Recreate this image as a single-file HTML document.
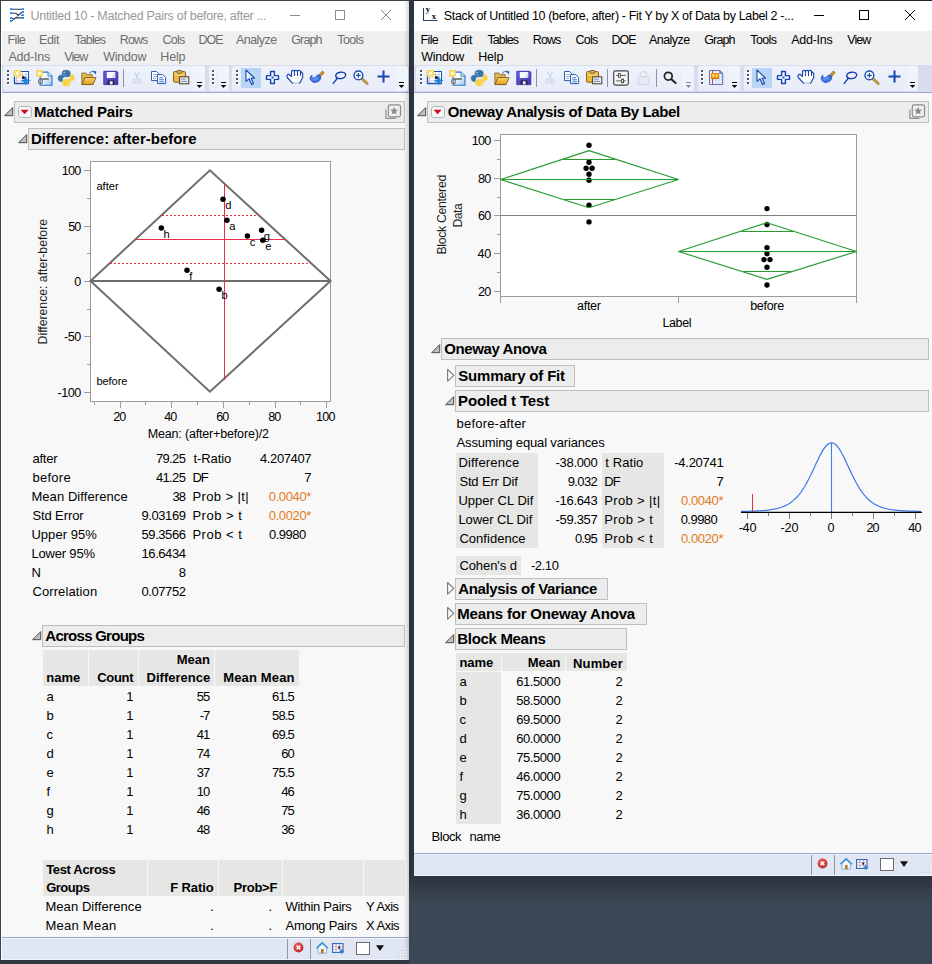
<!DOCTYPE html>
<html lang="en">
<head>
<meta charset="utf-8">
<title>JMP - Matched Pairs and Oneway Analysis</title>
<style>

html,body{margin:0;padding:0;background:#3b4754}
body{width:932px;height:964px;overflow:hidden;position:relative;font-family:"Liberation Sans",sans-serif;font-size:13px;color:#000}
div,section,nav,header,footer,main{position:absolute;box-sizing:border-box}
.g{left:0;top:0;width:932px;height:964px}
span,h1,h2,h3{position:absolute;white-space:pre;line-height:normal;margin:0;padding:0;font-weight:400}
svg{position:absolute;overflow:visible}
svg text{font-family:"Liberation Sans",sans-serif}
.hb{background:#ececec;border:1px solid #bebebe}
.th{background:#e6e6e4}

</style>
</head>
<body>
<div class="g" id="windows" aria-label="JMP windows on desktop">
<div style="left:0px;top:0px;width:932px;height:964px;background:#3b4754;"></div>
<div style="left:409px;top:0px;width:523px;height:905px;background:linear-gradient(to bottom,#2c343f 0,#2c343f 876px,#2d3641 880px,#333e4a 890px,#3b4754 905px);"></div>
<div style="left:0px;top:958px;width:409px;height:6px;background:linear-gradient(to bottom,#2a323c,#333d49);"></div>
<div style="left:0px;top:0px;width:409px;height:960px;background:#3b434f;"></div>
<!-- window 1 -->
<div style="left:1px;top:1px;width:408px;height:30px;background:#ffffff;"></div>
<div style="left:1px;top:31px;width:408px;height:34px;background:#f0f0f0;"></div>
<div style="left:1px;top:65px;width:408px;height:28px;background:#d7ddef;border-bottom:1px solid #9ca6d2;"></div>
<div style="left:1px;top:93px;width:408px;height:844px;background:#f8f8f8;"></div>
<div style="left:1px;top:937px;width:408px;height:23px;background:#e1e7f2;border-top:1px solid #9aa4d0;box-shadow:inset 0 1px 0 #f1f4fb,inset 0 -1px 0 #eef2fa;"></div>
<div style="left:1px;top:31px;width:1px;height:929px;background:#fbfcfe;"></div>
<div style="left:403px;top:1px;width:6px;height:959px;background:linear-gradient(to right,rgba(0,0,0,0) 0,rgba(0,0,0,0.04) 40%,rgba(0,0,0,0.16) 100%);"></div>
<div style="left:414px;top:0px;width:518px;height:1px;background:#20262e;"></div>
<!-- window 414 -->
<div style="left:414px;top:1px;width:518px;height:30px;background:#ffffff;"></div>
<div style="left:414px;top:31px;width:518px;height:34px;background:#f0f0f0;"></div>
<div style="left:414px;top:65px;width:518px;height:28px;background:#d7ddef;border-bottom:1px solid #9ca6d2;"></div>
<div style="left:414px;top:93px;width:518px;height:760px;background:#f8f8f8;"></div>
<div style="left:414px;top:853px;width:518px;height:23px;background:#e1e7f2;border-top:1px solid #9aa4d0;box-shadow:inset 0 1px 0 #f1f4fb,inset 0 -1px 0 #eef2fa;"></div>
<svg style="left:284px;top:5px" width="120" height="22" viewBox="0 0 120 22" fill="none" stroke="#8c8c8c" stroke-width="1"><path d="M6 10.5H16"/><rect x="51.5" y="5.5" width="9" height="9"/><path d="M97 5L107 15M107 5L97 15"/></svg>
<svg style="left:808px;top:5px" width="120" height="22" viewBox="0 0 120 22" fill="none" stroke="#000000" stroke-width="1"><path d="M6 10.5H16"/><rect x="51.5" y="5.5" width="9" height="9"/><path d="M97 5L107 15M107 5L97 15"/></svg>
<svg style="left:10px;top:8px" width="14" height="14" viewBox="0 0 14 14">
<g stroke="#1f3d68" stroke-width="1.1" fill="none"><path d="M1.6 1.2H12.4M1.6 5.2H5.8L8.4 7.2L12.2 4M1.6 10L3.8 11.2L6 9.9H12.4M11 7.2H12.4"/><path d="M1.6 13.1L8.4 7.4" stroke-dasharray="1.6 0.9"/></g>
<g fill="#3b8de6"><rect x="0" y="0.1" width="2" height="2"/><rect x="0" y="4.1" width="2" height="2"/><rect x="0" y="9" width="2" height="2"/><rect x="0" y="12" width="2" height="2"/><rect x="12" y="0.1" width="2" height="2"/><rect x="12" y="3" width="2" height="2"/><rect x="12" y="6.1" width="2" height="2"/><rect x="12" y="9" width="2" height="2"/></g>
</svg>
<svg style="left:422px;top:7px" width="18" height="16" viewBox="0 0 18 16">
<path d="M1.5 1V13.5H15.2" stroke="#1f3f68" stroke-width="1.1" fill="none"/>
<text x="3.7" y="5.2" style="font:700 8.6px 'Liberation Serif',serif" fill="#000">y</text>
<text x="9.7" y="12.1" style="font:700 8.6px 'Liberation Serif',serif" fill="#000">x</text>
</svg>
<span style="left:30.50px;top:9.00px;font-size:12.5px;color:#999999;letter-spacing:-0.286px;">Untitled 10 - Matched Pairs of before, after ...</span>
<span style="left:443.80px;top:9.00px;font-size:12.5px;letter-spacing:-0.352px;">Stack of Untitled 10 (before, after) - Fit Y by X of Data by Label 2 -...</span>
<nav class="g" aria-label="Menu bars">
<span style="left:7.50px;top:33.00px;font-size:12.5px;color:#6d6d6d;letter-spacing:-0.635px;">File</span>
<span style="left:39.00px;top:33.00px;font-size:12.5px;color:#6d6d6d;letter-spacing:-0.358px;">Edit</span>
<span style="left:74.50px;top:33.00px;font-size:12.5px;color:#6d6d6d;letter-spacing:-0.918px;">Tables</span>
<span style="left:119.80px;top:33.00px;font-size:12.5px;color:#6d6d6d;letter-spacing:-0.939px;">Rows</span>
<span style="left:162.50px;top:33.00px;font-size:12.5px;color:#6d6d6d;letter-spacing:-0.755px;">Cols</span>
<span style="left:198.50px;top:33.00px;font-size:12.5px;color:#6d6d6d;letter-spacing:-1.000px;">DOE</span>
<span style="left:236.00px;top:33.00px;font-size:12.5px;color:#6d6d6d;letter-spacing:-0.539px;">Analyze</span>
<span style="left:291.30px;top:33.00px;font-size:12.5px;color:#6d6d6d;letter-spacing:-0.900px;">Graph</span>
<span style="left:337.30px;top:33.00px;font-size:12.5px;color:#6d6d6d;letter-spacing:-0.609px;">Tools</span>
<span style="left:8.50px;top:50.00px;font-size:12.5px;color:#6d6d6d;letter-spacing:-0.224px;">Add-Ins</span>
<span style="left:64.30px;top:50.00px;font-size:12.5px;color:#6d6d6d;letter-spacing:-1.000px;">View</span>
<span style="left:103.30px;top:50.00px;font-size:12.5px;color:#6d6d6d;letter-spacing:-0.268px;">Window</span>
<span style="left:160.30px;top:50.00px;font-size:12.5px;color:#6d6d6d;letter-spacing:-0.189px;">Help</span>
<span style="left:420.50px;top:33.00px;font-size:12.5px;letter-spacing:-0.635px;">File</span>
<span style="left:452.00px;top:33.00px;font-size:12.5px;letter-spacing:-0.358px;">Edit</span>
<span style="left:487.50px;top:33.00px;font-size:12.5px;letter-spacing:-0.918px;">Tables</span>
<span style="left:532.80px;top:33.00px;font-size:12.5px;letter-spacing:-0.939px;">Rows</span>
<span style="left:575.50px;top:33.00px;font-size:12.5px;letter-spacing:-0.755px;">Cols</span>
<span style="left:611.50px;top:33.00px;font-size:12.5px;letter-spacing:-1.000px;">DOE</span>
<span style="left:649.00px;top:33.00px;font-size:12.5px;letter-spacing:-0.539px;">Analyze</span>
<span style="left:704.30px;top:33.00px;font-size:12.5px;letter-spacing:-0.900px;">Graph</span>
<span style="left:750.30px;top:33.00px;font-size:12.5px;letter-spacing:-0.609px;">Tools</span>
<span style="left:791.30px;top:33.00px;font-size:12.5px;letter-spacing:-0.274px;">Add-Ins</span>
<span style="left:847.30px;top:33.00px;font-size:12.5px;letter-spacing:-1.000px;">View</span>
<span style="left:421.30px;top:50.00px;font-size:12.5px;letter-spacing:-0.288px;">Window</span>
<span style="left:478.30px;top:50.00px;font-size:12.5px;letter-spacing:-0.222px;">Help</span>
</nav>
</div>
<div class="g" id="toolbars" aria-label="Toolbars and status bars">
<div style="left:3.4px;top:66px;width:201.4px;height:25px;background:linear-gradient(to bottom,#eef2fb,#e8ecf8);border-radius:3px;"></div>
<div style="left:193.3px;top:66px;width:11.5px;height:25px;background:linear-gradient(to bottom,#f1f6fd,#ecf1fa);border-radius:0 3px 3px 0;"></div>
<div style="left:209px;top:66px;width:20px;height:25px;background:linear-gradient(to bottom,#eef2fb,#e8ecf8);border-radius:3px;"></div>
<div style="left:217.5px;top:66px;width:11.5px;height:25px;background:linear-gradient(to bottom,#f1f6fd,#ecf1fa);border-radius:0 3px 3px 0;"></div>
<div style="left:232.4px;top:66px;width:175.1px;height:25px;background:linear-gradient(to bottom,#eef2fb,#e8ecf8);border-radius:3px;"></div>
<div style="left:396.0px;top:66px;width:11.5px;height:25px;background:linear-gradient(to bottom,#f1f6fd,#ecf1fa);border-radius:0 3px 3px 0;"></div>
<svg style="left:7px;top:70px" width="3" height="15" viewBox="0 0 3 15"><rect x="1" y="1" width="2" height="2" fill="#fff"/><rect x="0" y="0" width="2" height="2" fill="#505560"/><rect x="1" y="5" width="2" height="2" fill="#fff"/><rect x="0" y="4" width="2" height="2" fill="#505560"/><rect x="1" y="9" width="2" height="2" fill="#fff"/><rect x="0" y="8" width="2" height="2" fill="#505560"/><rect x="1" y="13" width="2" height="2" fill="#fff"/><rect x="0" y="12" width="2" height="2" fill="#505560"/></svg>
<svg style="left:14px;top:70px" width="17" height="16" viewBox="0 0 17 16">
<rect x="0.5" y="1.5" width="14" height="12" fill="#fff" stroke="#1a56b0" stroke-width="1"/><path d="M0.5 13.5H14.5M0.5 1.5V13.5" stroke="#1a56b0" stroke-width="1.3" fill="none"/>
<path d="M1.4 4.5H13.6" stroke="#ee8f98" stroke-width="0.8" stroke-dasharray="1 1"/>
<path d="M1.4 8H13.6M1.4 10.8H13.6" stroke="#b4c8ea" stroke-width="0.7"/>
<path d="M8.4 2.5V13M12 2.5V13" stroke="#7da0de" stroke-width="0.7"/><path d="M2.6 7V13" stroke="#ee8f98" stroke-width="0.7"/>
<rect x="0" y="0" width="7" height="6.7" fill="#f8d247"/>
<path d="M3.5 0.3V6.4M0.3 3.35H6.7M1 0.9L6 5.8M6 0.9L1 5.8" stroke="#fff6c4" stroke-width="0.8"/><circle cx="3.5" cy="3.35" r="1.2" fill="#fffbe6"/>
<circle cx="9.5" cy="7.4" r="1.5" fill="#0a0a0a"/>
<path d="M11.7 6.3L13.3 9.2L16.7 10.3L13.5 12L11.6 15.5L9.9 12L6.5 10.8L10 9.4Z" fill="#1e84dc"/>
</svg>
<svg style="left:36px;top:70px" width="17" height="16" viewBox="0 0 17 16">
<defs><linearGradient id="pg36" x1="0" y1="0" x2="1" y2="1"><stop offset="0.3" stop-color="#fdfeff"/><stop offset="1" stop-color="#9cc6ee"/></linearGradient></defs>
<path d="M4.2 2.1H12L16 6V15.3H4.2Z" fill="url(#pg36)" stroke="#2a78c6" stroke-width="1.1"/>
<path d="M12 2.1V6H16" fill="#e9f3fc" stroke="#2a78c6" stroke-width="0.9"/>
<rect x="0" y="0" width="6.8" height="6.7" fill="#f8d247"/>
<path d="M3.4 0.3V6.4M0.3 3.35H6.5M1 0.9L5.8 5.8M5.8 0.9L1 5.8" stroke="#fff6c4" stroke-width="0.8"/><circle cx="3.4" cy="3.35" r="1.2" fill="#fffbe6"/>
<path d="M4.4 9H12.8" stroke="#6a6a6a" stroke-width="1.6"/>
<ellipse cx="4.5" cy="11.4" rx="1.9" ry="2.4" fill="none" stroke="#7a7a7a" stroke-width="1.2"/>
</svg>
<svg style="left:58px;top:70px" width="17" height="16" viewBox="0 0 17 16">
<path d="M8 0.2C5.2 0.2 4.2 1.2 4.2 2.9V4.6H8.2V5.2H2.9C1 5.2 0.2 6.5 0.2 8.3C0.2 10.1 1 11.4 2.9 11.4H4.4V9.1C4.4 7.7 5.5 6.7 6.9 6.7H10.3C11.5 6.7 12.2 5.9 12.2 4.7V2.9C12.2 1.2 11 0.2 8 0.2Z" fill="#3774a9" stroke="#3774a9" stroke-width="0.7"/>
<path d="M8.4 15.9C11.2 15.9 12.2 14.9 12.2 13.2V11.5H8.2V10.9H13.5C15.4 10.9 16.2 9.6 16.2 7.8C16.2 6 15.4 4.7 13.5 4.7H12.4V7C12.4 8.4 11.3 9.4 9.9 9.4H6.5C5.3 9.4 4.6 10.2 4.6 11.4V13.2C4.6 14.9 5.8 15.9 8.4 15.9Z" fill="#f8d245" stroke="#f8d245" stroke-width="0.7"/>
<circle cx="6.1" cy="2.4" r="0.75" fill="#cfe0f0"/><circle cx="10.3" cy="13.7" r="0.75" fill="#fff3c0"/>
</svg>
<svg style="left:80.5px;top:70px" width="16" height="16" viewBox="0 0 16 16">
<defs><linearGradient id="fo80" x1="0" y1="0" x2="0" y2="1"><stop offset="0" stop-color="#fbd668"/><stop offset="1" stop-color="#e39a1c"/></linearGradient></defs>
<path d="M0.8 14.4V3H5L6.2 4.6H11.2V14.4Z" fill="#dcb650" stroke="#94742c" stroke-width="0.9"/>
<path d="M1 14.6L3.8 7.6H15L12 14.6Z" fill="url(#fo80)" stroke="#7a5a1a" stroke-width="0.9"/>
<path d="M8.4 3.4C9.4 1.2 12 0.8 13.6 2.6" fill="none" stroke="#5a86c4" stroke-width="1.2"/>
<path d="M12.2 0.4L15.4 1.6L14.6 4.8Z" fill="#2a5cac"/>
</svg>
<svg style="left:102.5px;top:70px" width="16" height="16" viewBox="0 0 16 16">
<defs><linearGradient id="sv102" x1="0" y1="0" x2="1" y2="1"><stop offset="0" stop-color="#6a62e2"/><stop offset="1" stop-color="#3d36aa"/></linearGradient></defs>
<path d="M0.8 1.3H13.8L14.8 2.3V14.6H0.8Z" fill="url(#sv102)" stroke="#39339c" stroke-width="0.9"/>
<rect x="3.8" y="2" width="8.4" height="6" fill="#f6f8ff"/><path d="M12.2 2L8.6 8H12.2Z" fill="#d5daf0"/>
<rect x="4.6" y="10.4" width="6.8" height="4.2" fill="#23224e"/>
<rect x="6.8" y="11.2" width="2.8" height="3.2" fill="#eeeef8"/>
</svg>
<div style="left:123px;top:69px;width:1px;height:18px;background:#8e93a3;"></div>
<svg style="left:132.4px;top:71px" width="10" height="13" viewBox="0 0 10 13">
<g fill="none" stroke="#cbd6ec" stroke-width="1.2">
<path d="M2.4 0.4L6.2 8.4M7.6 0.4L3.8 8.4"/>
<ellipse cx="2.4" cy="10.4" rx="1.6" ry="2"/><ellipse cx="7.6" cy="10.4" rx="1.6" ry="2"/></g>
</svg>
<svg style="left:150.6px;top:71px" width="16" height="14" viewBox="0 0 16 14">
<path d="M0.5 0.5H5.6L8.4 3.3V9.6H0.5Z" fill="#fff" stroke="#2b5cb6" stroke-width="1"/>
<path d="M2 3.6H6M2 5.6H6.6M2 7.6H5" stroke="#86a7dc" stroke-width="0.9"/>
<path d="M6.5 3.6H11.8L14.6 6.4V12.6H6.5Z" fill="#fff" stroke="#2b5cb6" stroke-width="1"/>
<path d="M8.2 6.8H12M8.2 8.8H13M8.2 10.8H13" stroke="#3f71c8" stroke-width="1"/>
</svg>
<svg style="left:172.6px;top:70px" width="17" height="15" viewBox="0 0 17 15">
<rect x="0.5" y="1.6" width="12" height="10.6" rx="1" fill="#ecb638" stroke="#8a6418" stroke-width="1"/>
<path d="M1.4 2.6H11.6V6H1.4Z" fill="#f7d877" opacity="0.7"/>
<rect x="4" y="0.5" width="4.8" height="2.8" rx="0.8" fill="#d8b768" stroke="#6f5a26" stroke-width="0.9"/>
<rect x="6.6" y="6.8" width="9.2" height="7" fill="#e6ebf5" stroke="#4f3c22" stroke-width="1"/>
<path d="M8.2 9.2H12.6M8.2 11.4H14" stroke="#7d8aa5" stroke-width="1"/>
</svg>
<svg style="left:197px;top:82px" width="6" height="7" viewBox="0 0 6 7"><path d="M0 0.5H5" stroke="#000" stroke-width="1"/><path d="M-0.2 3H5.2L2.5 6.1Z" fill="#000"/></svg>
<svg style="left:212px;top:70px" width="3" height="15" viewBox="0 0 3 15"><rect x="1" y="1" width="2" height="2" fill="#fff"/><rect x="0" y="0" width="2" height="2" fill="#505560"/><rect x="1" y="5" width="2" height="2" fill="#fff"/><rect x="0" y="4" width="2" height="2" fill="#505560"/><rect x="1" y="9" width="2" height="2" fill="#fff"/><rect x="0" y="8" width="2" height="2" fill="#505560"/><rect x="1" y="13" width="2" height="2" fill="#fff"/><rect x="0" y="12" width="2" height="2" fill="#505560"/></svg>
<svg style="left:221px;top:82px" width="6" height="7" viewBox="0 0 6 7"><path d="M0 0.5H5" stroke="#000" stroke-width="1"/><path d="M-0.2 3H5.2L2.5 6.1Z" fill="#000"/></svg>
<svg style="left:235.8px;top:70px" width="3" height="15" viewBox="0 0 3 15"><rect x="1" y="1" width="2" height="2" fill="#fff"/><rect x="0" y="0" width="2" height="2" fill="#505560"/><rect x="1" y="5" width="2" height="2" fill="#fff"/><rect x="0" y="4" width="2" height="2" fill="#505560"/><rect x="1" y="9" width="2" height="2" fill="#fff"/><rect x="0" y="8" width="2" height="2" fill="#505560"/><rect x="1" y="13" width="2" height="2" fill="#fff"/><rect x="0" y="12" width="2" height="2" fill="#505560"/></svg>
<div style="left:241px;top:68px;width:20px;height:20px;background:#b9d5f5;"></div>
<svg style="left:245.3px;top:69.2px" width="12" height="17" viewBox="0 0 12 17"><defs><linearGradient id="ar245" x1="0" y1="0" x2="1" y2="1"><stop offset="0.2" stop-color="#ffffff"/><stop offset="1" stop-color="#a9c8f0"/></linearGradient></defs><path d="M1 1V12.4L4 9.8L6.6 15.4L8.6 14.4L6.2 9.2H9.6Z" fill="url(#ar245)" stroke="#1a48b0" stroke-width="1.1" stroke-linejoin="round"/></svg>
<svg style="left:265.1px;top:70.05px" width="15" height="15" viewBox="0 0 16 16"><path d="M6 1.6H10V6H14.4V10H10V14.4H6V10H1.6V6H6Z" fill="#f4f8fe" stroke="#1747b0" stroke-width="1.5" stroke-linejoin="round"/><rect x="7" y="7" width="2" height="2" fill="#1747b0"/></svg>
<svg style="left:284px;top:66px" width="24" height="22" viewBox="0 0 24 22"><path d="M8.6 17.4L3.3 11.5C2.3 10.2 3.4 8.2 5 8.4L7.5 10.5V5.5C7.5 4.5 8.2 4.4 8.9 4.4C9.8 4.4 10.4 4.6 10.4 5.5C10.4 4.5 11.2 4.4 11.9 4.4C12.8 4.4 13.5 4.6 13.5 5.5C13.5 4.5 14.4 4.4 15 4.4C16 4.4 16.5 4.8 16.6 5.5L18.7 7.5V11.4L15.5 17.4Z" fill="#fff" stroke="#1a44b0" stroke-width="1.15" stroke-linejoin="round"/><path d="M10.4 5.5V10M13.5 5.5V10M16.5 5.6V10" stroke="#1a44b0" stroke-width="1" fill="none"/><path d="M8.8 17.5H15.4" stroke="#c9d8ec" stroke-width="1.2"/></svg>
<svg style="left:306px;top:66px" width="22" height="22" viewBox="0 0 22 22"><defs><radialGradient id="br306" cx="0.45" cy="0.45" r="0.7"><stop offset="0" stop-color="#6aa4f4"/><stop offset="1" stop-color="#1650d0"/></radialGradient></defs>
<path d="M13.2 8.6L16.4 5L18.1 6.6L15 10.2Z" fill="#dba324" stroke="#8a5c12" stroke-width="0.8" stroke-linejoin="round"/>
<path d="M6.2 9.2C4.6 9.8 3.8 11.2 4.2 12.8C4.8 15.2 7 16.8 9.6 16.4C12.6 16 14.8 13.8 14.8 11.6C14.8 10.2 14 9.2 13 9C11.6 8.8 10.6 9.8 9.6 10.8C8.6 11.8 7 12.2 6.2 11.4C5.6 10.8 5.8 9.8 6.2 9.2Z" fill="url(#br306)" stroke="#1648c4" stroke-width="0.7"/></svg>
<svg style="left:328px;top:66px" width="22" height="22" viewBox="0 0 22 22"><ellipse cx="12.7" cy="9.4" rx="5" ry="3.2" fill="none" stroke="#143cb0" stroke-width="1.4" transform="rotate(-8 12.7 9.4)"/><path d="M8.9 11.4C9.6 12.6 8.6 13.6 7.6 14.4L5.2 17.4" fill="none" stroke="#143cb0" stroke-width="1.4" stroke-linecap="round"/></svg>
<svg style="left:352.8px;top:70px" width="16" height="15" viewBox="0 0 16 15"><path d="M8.6 8.6L14.2 13.4" stroke="#8a6418" stroke-width="2.6" stroke-linecap="round"/><path d="M8.6 8.6L14.2 13.4" stroke="#d9a63a" stroke-width="1.5" stroke-linecap="round"/>
<circle cx="5.4" cy="5.4" r="4.4" fill="#fff" stroke="#1c4fb0" stroke-width="1.4"/><path d="M3 5.4H7.8M5.4 3V7.8" stroke="#1c4fb0" stroke-width="1.3"/></svg>
<svg style="left:376.6px;top:70.4px" width="13" height="13" viewBox="0 0 13 13"><path d="M6.5 0.5V12.5M0.5 6.5H12.5" stroke="#1a48b8" stroke-width="2.1"/></svg>
<svg style="left:398.6px;top:82px" width="6" height="7" viewBox="0 0 6 7"><path d="M0 0.5H5" stroke="#000" stroke-width="1"/><path d="M-0.2 3H5.2L2.5 6.1Z" fill="#000"/></svg>
<div style="left:416.4px;top:66px;width:277.20000000000005px;height:25px;background:linear-gradient(to bottom,#eef2fb,#e8ecf8);border-radius:3px;"></div>
<div style="left:682.1px;top:66px;width:11.5px;height:25px;background:linear-gradient(to bottom,#f1f6fd,#ecf1fa);border-radius:0 3px 3px 0;"></div>
<div style="left:698.2px;top:66px;width:42.0px;height:25px;background:linear-gradient(to bottom,#eef2fb,#e8ecf8);border-radius:3px;"></div>
<div style="left:728.7px;top:66px;width:11.5px;height:25px;background:linear-gradient(to bottom,#f1f6fd,#ecf1fa);border-radius:0 3px 3px 0;"></div>
<div style="left:744px;top:66px;width:174px;height:25px;background:linear-gradient(to bottom,#eef2fb,#e8ecf8);border-radius:3px;"></div>
<div style="left:906.5px;top:66px;width:11.5px;height:25px;background:linear-gradient(to bottom,#f1f6fd,#ecf1fa);border-radius:0 3px 3px 0;"></div>
<svg style="left:420px;top:70px" width="3" height="15" viewBox="0 0 3 15"><rect x="1" y="1" width="2" height="2" fill="#fff"/><rect x="0" y="0" width="2" height="2" fill="#505560"/><rect x="1" y="5" width="2" height="2" fill="#fff"/><rect x="0" y="4" width="2" height="2" fill="#505560"/><rect x="1" y="9" width="2" height="2" fill="#fff"/><rect x="0" y="8" width="2" height="2" fill="#505560"/><rect x="1" y="13" width="2" height="2" fill="#fff"/><rect x="0" y="12" width="2" height="2" fill="#505560"/></svg>
<svg style="left:427px;top:70px" width="17" height="16" viewBox="0 0 17 16">
<rect x="0.5" y="1.5" width="14" height="12" fill="#fff" stroke="#1a56b0" stroke-width="1"/><path d="M0.5 13.5H14.5M0.5 1.5V13.5" stroke="#1a56b0" stroke-width="1.3" fill="none"/>
<path d="M1.4 4.5H13.6" stroke="#ee8f98" stroke-width="0.8" stroke-dasharray="1 1"/>
<path d="M1.4 8H13.6M1.4 10.8H13.6" stroke="#b4c8ea" stroke-width="0.7"/>
<path d="M8.4 2.5V13M12 2.5V13" stroke="#7da0de" stroke-width="0.7"/><path d="M2.6 7V13" stroke="#ee8f98" stroke-width="0.7"/>
<rect x="0" y="0" width="7" height="6.7" fill="#f8d247"/>
<path d="M3.5 0.3V6.4M0.3 3.35H6.7M1 0.9L6 5.8M6 0.9L1 5.8" stroke="#fff6c4" stroke-width="0.8"/><circle cx="3.5" cy="3.35" r="1.2" fill="#fffbe6"/>
<circle cx="9.5" cy="7.4" r="1.5" fill="#0a0a0a"/>
<path d="M11.7 6.3L13.3 9.2L16.7 10.3L13.5 12L11.6 15.5L9.9 12L6.5 10.8L10 9.4Z" fill="#1e84dc"/>
</svg>
<svg style="left:449px;top:70px" width="17" height="16" viewBox="0 0 17 16">
<defs><linearGradient id="pg449" x1="0" y1="0" x2="1" y2="1"><stop offset="0.3" stop-color="#fdfeff"/><stop offset="1" stop-color="#9cc6ee"/></linearGradient></defs>
<path d="M4.2 2.1H12L16 6V15.3H4.2Z" fill="url(#pg449)" stroke="#2a78c6" stroke-width="1.1"/>
<path d="M12 2.1V6H16" fill="#e9f3fc" stroke="#2a78c6" stroke-width="0.9"/>
<rect x="0" y="0" width="6.8" height="6.7" fill="#f8d247"/>
<path d="M3.4 0.3V6.4M0.3 3.35H6.5M1 0.9L5.8 5.8M5.8 0.9L1 5.8" stroke="#fff6c4" stroke-width="0.8"/><circle cx="3.4" cy="3.35" r="1.2" fill="#fffbe6"/>
<path d="M4.4 9H12.8" stroke="#6a6a6a" stroke-width="1.6"/>
<ellipse cx="4.5" cy="11.4" rx="1.9" ry="2.4" fill="none" stroke="#7a7a7a" stroke-width="1.2"/>
</svg>
<svg style="left:471px;top:70px" width="17" height="16" viewBox="0 0 17 16">
<path d="M8 0.2C5.2 0.2 4.2 1.2 4.2 2.9V4.6H8.2V5.2H2.9C1 5.2 0.2 6.5 0.2 8.3C0.2 10.1 1 11.4 2.9 11.4H4.4V9.1C4.4 7.7 5.5 6.7 6.9 6.7H10.3C11.5 6.7 12.2 5.9 12.2 4.7V2.9C12.2 1.2 11 0.2 8 0.2Z" fill="#3774a9" stroke="#3774a9" stroke-width="0.7"/>
<path d="M8.4 15.9C11.2 15.9 12.2 14.9 12.2 13.2V11.5H8.2V10.9H13.5C15.4 10.9 16.2 9.6 16.2 7.8C16.2 6 15.4 4.7 13.5 4.7H12.4V7C12.4 8.4 11.3 9.4 9.9 9.4H6.5C5.3 9.4 4.6 10.2 4.6 11.4V13.2C4.6 14.9 5.8 15.9 8.4 15.9Z" fill="#f8d245" stroke="#f8d245" stroke-width="0.7"/>
<circle cx="6.1" cy="2.4" r="0.75" fill="#cfe0f0"/><circle cx="10.3" cy="13.7" r="0.75" fill="#fff3c0"/>
</svg>
<svg style="left:493.5px;top:70px" width="16" height="16" viewBox="0 0 16 16">
<defs><linearGradient id="fo493" x1="0" y1="0" x2="0" y2="1"><stop offset="0" stop-color="#fbd668"/><stop offset="1" stop-color="#e39a1c"/></linearGradient></defs>
<path d="M0.8 14.4V3H5L6.2 4.6H11.2V14.4Z" fill="#dcb650" stroke="#94742c" stroke-width="0.9"/>
<path d="M1 14.6L3.8 7.6H15L12 14.6Z" fill="url(#fo493)" stroke="#7a5a1a" stroke-width="0.9"/>
<path d="M8.4 3.4C9.4 1.2 12 0.8 13.6 2.6" fill="none" stroke="#5a86c4" stroke-width="1.2"/>
<path d="M12.2 0.4L15.4 1.6L14.6 4.8Z" fill="#2a5cac"/>
</svg>
<svg style="left:515.5px;top:70px" width="16" height="16" viewBox="0 0 16 16">
<defs><linearGradient id="sv515" x1="0" y1="0" x2="1" y2="1"><stop offset="0" stop-color="#6a62e2"/><stop offset="1" stop-color="#3d36aa"/></linearGradient></defs>
<path d="M0.8 1.3H13.8L14.8 2.3V14.6H0.8Z" fill="url(#sv515)" stroke="#39339c" stroke-width="0.9"/>
<rect x="3.8" y="2" width="8.4" height="6" fill="#f6f8ff"/><path d="M12.2 2L8.6 8H12.2Z" fill="#d5daf0"/>
<rect x="4.6" y="10.4" width="6.8" height="4.2" fill="#23224e"/>
<rect x="6.8" y="11.2" width="2.8" height="3.2" fill="#eeeef8"/>
</svg>
<div style="left:536px;top:69px;width:1px;height:18px;background:#8e93a3;"></div>
<svg style="left:545.4px;top:71px" width="10" height="13" viewBox="0 0 10 13">
<g fill="none" stroke="#cbd6ec" stroke-width="1.2">
<path d="M2.4 0.4L6.2 8.4M7.6 0.4L3.8 8.4"/>
<ellipse cx="2.4" cy="10.4" rx="1.6" ry="2"/><ellipse cx="7.6" cy="10.4" rx="1.6" ry="2"/></g>
</svg>
<svg style="left:563.6px;top:71px" width="16" height="14" viewBox="0 0 16 14">
<path d="M0.5 0.5H5.6L8.4 3.3V9.6H0.5Z" fill="#fff" stroke="#2b5cb6" stroke-width="1"/>
<path d="M2 3.6H6M2 5.6H6.6M2 7.6H5" stroke="#86a7dc" stroke-width="0.9"/>
<path d="M6.5 3.6H11.8L14.6 6.4V12.6H6.5Z" fill="#fff" stroke="#2b5cb6" stroke-width="1"/>
<path d="M8.2 6.8H12M8.2 8.8H13M8.2 10.8H13" stroke="#3f71c8" stroke-width="1"/>
</svg>
<svg style="left:585.6px;top:70px" width="17" height="15" viewBox="0 0 17 15">
<rect x="0.5" y="1.6" width="12" height="10.6" rx="1" fill="#ecb638" stroke="#8a6418" stroke-width="1"/>
<path d="M1.4 2.6H11.6V6H1.4Z" fill="#f7d877" opacity="0.7"/>
<rect x="4" y="0.5" width="4.8" height="2.8" rx="0.8" fill="#d8b768" stroke="#6f5a26" stroke-width="0.9"/>
<rect x="6.6" y="6.8" width="9.2" height="7" fill="#e6ebf5" stroke="#4f3c22" stroke-width="1"/>
<path d="M8.2 9.2H12.6M8.2 11.4H14" stroke="#7d8aa5" stroke-width="1"/>
</svg>
<div style="left:607px;top:69px;width:1px;height:18px;background:#8e93a3;"></div>
<svg style="left:613px;top:70px" width="16" height="16" viewBox="0 0 16 16"><rect x="0.7" y="0.9" width="14.6" height="14.2" rx="1.8" fill="#f7f7f7" stroke="#444" stroke-width="1.2"/>
<path d="M3.2 5.4H12.8M3.2 10.9H12.8" stroke="#444" stroke-width="0.9"/>
<rect x="5.5" y="3.6" width="1.8" height="3.6" fill="#f7f7f7" stroke="#444" stroke-width="0.9"/><rect x="8.7" y="9.1" width="1.8" height="3.6" fill="#f7f7f7" stroke="#444" stroke-width="0.9"/></svg>
<svg style="left:637px;top:70px" width="13" height="15" viewBox="0 0 13 15"><path d="M3.2 6.6V4.4C3.2 0.8 9.6 0.8 9.6 4.4V6.6" fill="none" stroke="#d5d9e6" stroke-width="1.2"/><rect x="0.8" y="6.6" width="11.2" height="8" rx="1" fill="#e6e9f3" stroke="#d5d9e6" stroke-width="1.1"/></svg>
<div style="left:656px;top:69px;width:1px;height:18px;background:#8e93a3;"></div>
<svg style="left:663px;top:71px" width="14" height="14" viewBox="0 0 14 14"><circle cx="5.3" cy="5.2" r="3.9" fill="none" stroke="#222" stroke-width="1.7"/><path d="M8.4 8.3L12.6 12" stroke="#222" stroke-width="2.1" stroke-linecap="round"/></svg>
<svg style="left:685.5px;top:82px" width="6" height="7" viewBox="0 0 6 7"><path d="M0 0.5H5" stroke="#8a8f9c" stroke-width="1"/><path d="M-0.2 3H5.2L2.5 6.1Z" fill="#8a8f9c"/></svg>
<svg style="left:701.2px;top:70px" width="3" height="15" viewBox="0 0 3 15"><rect x="1" y="1" width="2" height="2" fill="#fff"/><rect x="0" y="0" width="2" height="2" fill="#505560"/><rect x="1" y="5" width="2" height="2" fill="#fff"/><rect x="0" y="4" width="2" height="2" fill="#505560"/><rect x="1" y="9" width="2" height="2" fill="#fff"/><rect x="0" y="8" width="2" height="2" fill="#505560"/><rect x="1" y="13" width="2" height="2" fill="#fff"/><rect x="0" y="12" width="2" height="2" fill="#505560"/></svg>
<svg style="left:709px;top:70px" width="15" height="15" viewBox="0 0 15 15"><path d="M0.5 0.5H10.8L13.7 3.3V14.5H0.5Z" fill="#c4dcf8" stroke="#5a60a6" stroke-width="0.9"/>
<g fill="#fff"><rect x="1.2" y="1.3" width="1.8" height="1.7"/><rect x="1.2" y="4.5" width="1.8" height="1.7"/><rect x="1.2" y="7.6" width="1.8" height="1.7"/><rect x="1.2" y="10.6" width="1.8" height="1.7"/><rect x="1.2" y="13.0" width="1.8" height="1.0"/><rect x="4.4" y="1.3" width="1.8" height="1.7"/><rect x="4.4" y="4.5" width="1.8" height="1.7"/><rect x="4.4" y="7.6" width="1.8" height="1.7"/><rect x="4.4" y="10.6" width="1.8" height="1.7"/><rect x="4.4" y="13.0" width="1.8" height="1.0"/><rect x="7.5" y="1.3" width="1.8" height="1.7"/><rect x="7.5" y="4.5" width="1.8" height="1.7"/><rect x="7.5" y="7.6" width="1.8" height="1.7"/><rect x="7.5" y="10.6" width="1.8" height="1.7"/><rect x="7.5" y="13.0" width="1.8" height="1.0"/><rect x="10.5" y="4.5" width="1.8" height="1.7"/><rect x="10.5" y="7.6" width="1.8" height="1.7"/><rect x="10.5" y="10.6" width="1.8" height="1.7"/><rect x="10.5" y="13.0" width="1.8" height="1.0"/></g>
<path d="M10.8 0.5V3.3H13.7" fill="#4a90e0" stroke="#5a60a6" stroke-width="0.6"/>
<path d="M3.5 0.8V14.2" stroke="#f03a3a" stroke-width="1"/>
<rect x="2.1" y="3.1" width="8" height="5.6" fill="#f27a0a"/><path d="M2.1 8.3H10.1" stroke="#cf5a04" stroke-width="0.9"/><rect x="3.1" y="4" width="2.6" height="3.4" fill="#f6e23c"/><rect x="6.7" y="4" width="2" height="3.4" fill="#f6e23c"/></svg>
<svg style="left:731.8px;top:82px" width="6" height="7" viewBox="0 0 6 7"><path d="M0 0.5H5" stroke="#000" stroke-width="1"/><path d="M-0.2 3H5.2L2.5 6.1Z" fill="#000"/></svg>
<svg style="left:746.8px;top:70px" width="3" height="15" viewBox="0 0 3 15"><rect x="1" y="1" width="2" height="2" fill="#fff"/><rect x="0" y="0" width="2" height="2" fill="#505560"/><rect x="1" y="5" width="2" height="2" fill="#fff"/><rect x="0" y="4" width="2" height="2" fill="#505560"/><rect x="1" y="9" width="2" height="2" fill="#fff"/><rect x="0" y="8" width="2" height="2" fill="#505560"/><rect x="1" y="13" width="2" height="2" fill="#fff"/><rect x="0" y="12" width="2" height="2" fill="#505560"/></svg>
<div style="left:752px;top:68px;width:20px;height:20px;background:#b9d5f5;"></div>
<svg style="left:756.3px;top:69.2px" width="12" height="17" viewBox="0 0 12 17"><defs><linearGradient id="ar756" x1="0" y1="0" x2="1" y2="1"><stop offset="0.2" stop-color="#ffffff"/><stop offset="1" stop-color="#a9c8f0"/></linearGradient></defs><path d="M1 1V12.4L4 9.8L6.6 15.4L8.6 14.4L6.2 9.2H9.6Z" fill="url(#ar756)" stroke="#1a48b0" stroke-width="1.1" stroke-linejoin="round"/></svg>
<svg style="left:776.1px;top:70.05px" width="15" height="15" viewBox="0 0 16 16"><path d="M6 1.6H10V6H14.4V10H10V14.4H6V10H1.6V6H6Z" fill="#f4f8fe" stroke="#1747b0" stroke-width="1.5" stroke-linejoin="round"/><rect x="7" y="7" width="2" height="2" fill="#1747b0"/></svg>
<svg style="left:795px;top:66px" width="24" height="22" viewBox="0 0 24 22"><path d="M8.6 17.4L3.3 11.5C2.3 10.2 3.4 8.2 5 8.4L7.5 10.5V5.5C7.5 4.5 8.2 4.4 8.9 4.4C9.8 4.4 10.4 4.6 10.4 5.5C10.4 4.5 11.2 4.4 11.9 4.4C12.8 4.4 13.5 4.6 13.5 5.5C13.5 4.5 14.4 4.4 15 4.4C16 4.4 16.5 4.8 16.6 5.5L18.7 7.5V11.4L15.5 17.4Z" fill="#fff" stroke="#1a44b0" stroke-width="1.15" stroke-linejoin="round"/><path d="M10.4 5.5V10M13.5 5.5V10M16.5 5.6V10" stroke="#1a44b0" stroke-width="1" fill="none"/><path d="M8.8 17.5H15.4" stroke="#c9d8ec" stroke-width="1.2"/></svg>
<svg style="left:817px;top:66px" width="22" height="22" viewBox="0 0 22 22"><defs><radialGradient id="br817" cx="0.45" cy="0.45" r="0.7"><stop offset="0" stop-color="#6aa4f4"/><stop offset="1" stop-color="#1650d0"/></radialGradient></defs>
<path d="M13.2 8.6L16.4 5L18.1 6.6L15 10.2Z" fill="#dba324" stroke="#8a5c12" stroke-width="0.8" stroke-linejoin="round"/>
<path d="M6.2 9.2C4.6 9.8 3.8 11.2 4.2 12.8C4.8 15.2 7 16.8 9.6 16.4C12.6 16 14.8 13.8 14.8 11.6C14.8 10.2 14 9.2 13 9C11.6 8.8 10.6 9.8 9.6 10.8C8.6 11.8 7 12.2 6.2 11.4C5.6 10.8 5.8 9.8 6.2 9.2Z" fill="url(#br817)" stroke="#1648c4" stroke-width="0.7"/></svg>
<svg style="left:839px;top:66px" width="22" height="22" viewBox="0 0 22 22"><ellipse cx="12.7" cy="9.4" rx="5" ry="3.2" fill="none" stroke="#143cb0" stroke-width="1.4" transform="rotate(-8 12.7 9.4)"/><path d="M8.9 11.4C9.6 12.6 8.6 13.6 7.6 14.4L5.2 17.4" fill="none" stroke="#143cb0" stroke-width="1.4" stroke-linecap="round"/></svg>
<svg style="left:863.8px;top:70px" width="16" height="15" viewBox="0 0 16 15"><path d="M8.6 8.6L14.2 13.4" stroke="#8a6418" stroke-width="2.6" stroke-linecap="round"/><path d="M8.6 8.6L14.2 13.4" stroke="#d9a63a" stroke-width="1.5" stroke-linecap="round"/>
<circle cx="5.4" cy="5.4" r="4.4" fill="#fff" stroke="#1c4fb0" stroke-width="1.4"/><path d="M3 5.4H7.8M5.4 3V7.8" stroke="#1c4fb0" stroke-width="1.3"/></svg>
<svg style="left:887.6px;top:70.4px" width="13" height="13" viewBox="0 0 13 13"><path d="M6.5 0.5V12.5M0.5 6.5H12.5" stroke="#1a48b8" stroke-width="2.1"/></svg>
<svg style="left:909.6px;top:82px" width="6" height="7" viewBox="0 0 6 7"><path d="M0 0.5H5" stroke="#000" stroke-width="1"/><path d="M-0.2 3H5.2L2.5 6.1Z" fill="#000"/></svg>
<div style="left:287px;top:939px;width:1px;height:20px;background:#9095a9;"></div>
<div style="left:310px;top:939px;width:1px;height:20px;background:#9095a9;"></div>
<svg style="left:293.3px;top:942.4px" width="11" height="11" viewBox="0 0 11 11"><defs><radialGradient id="rd408" cx="0.4" cy="0.35" r="0.75"><stop offset="0" stop-color="#ee6a60"/><stop offset="1" stop-color="#b81c1c"/></radialGradient></defs><circle cx="5.5" cy="5.5" r="4.9" fill="url(#rd408)"/><path d="M3.7 3.7L7.3 7.3M7.3 3.7L3.7 7.3" stroke="#fff" stroke-width="1.5"/></svg>
<svg style="left:315.8px;top:942.4px" width="13" height="12" viewBox="0 0 13 12"><path d="M0.5 6.2L6.2 0.8L11.9 6.2" fill="none" stroke="#2f8ad4" stroke-width="1.5"/><path d="M2 5.8V11.2H10.4V5.8L6.2 2Z" fill="#f2f7fc" stroke="#6aa6dc" stroke-width="0.8"/><rect x="5" y="7" width="2.6" height="4.2" fill="#b5761c"/></svg>
<svg style="left:331.8px;top:942.8px" width="13" height="12" viewBox="0 0 13 12"><rect x="0.6" y="0.6" width="10.4" height="8.8" fill="#fff" stroke="#2b5fb4" stroke-width="1.1"/><path d="M0.6 3.4H11M0.6 6.2H11" stroke="#d98a8a" stroke-width="0.7"/><path d="M4 0.6V9.4M7.6 0.6V9.4" stroke="#7b9bd6" stroke-width="0.7"/><rect x="6.2" y="3.6" width="2" height="2" fill="#222"/><path d="M9.4 5.2L10.2 7.6L12.6 8L10.6 9.2L10.2 11.4L8.8 9.6L6.4 9.8L8.2 8.2Z" fill="#2484d6"/></svg>
<div style="left:356px;top:942px;width:14px;height:13px;background:#fff;border:1px solid #6a6a6a;"></div>
<svg style="left:375.8px;top:945px" width="9" height="7" viewBox="0 0 9 7"><path d="M0 0.2H8L4 6Z" fill="#111"/></svg>
<svg style="left:396px;top:947.4px" width="12" height="12" viewBox="0 0 12 12"><rect x="9" y="0" width="1.6" height="1.6" fill="#c9cedc"/><rect x="9.8" y="0.8" width="1.2" height="1.2" fill="#fbfcfe"/><rect x="9" y="3" width="1.6" height="1.6" fill="#c9cedc"/><rect x="9.8" y="3.8" width="1.2" height="1.2" fill="#fbfcfe"/><rect x="6" y="3" width="1.6" height="1.6" fill="#c9cedc"/><rect x="6.800000000000001" y="3.8" width="1.2" height="1.2" fill="#fbfcfe"/><rect x="9" y="6" width="1.6" height="1.6" fill="#c9cedc"/><rect x="9.8" y="6.8" width="1.2" height="1.2" fill="#fbfcfe"/><rect x="6" y="6" width="1.6" height="1.6" fill="#c9cedc"/><rect x="6.800000000000001" y="6.8" width="1.2" height="1.2" fill="#fbfcfe"/><rect x="3" y="6" width="1.6" height="1.6" fill="#c9cedc"/><rect x="3.8000000000000007" y="6.8" width="1.2" height="1.2" fill="#fbfcfe"/><rect x="9" y="9" width="1.6" height="1.6" fill="#c9cedc"/><rect x="9.8" y="9.8" width="1.2" height="1.2" fill="#fbfcfe"/><rect x="6" y="9" width="1.6" height="1.6" fill="#c9cedc"/><rect x="6.800000000000001" y="9.8" width="1.2" height="1.2" fill="#fbfcfe"/><rect x="3" y="9" width="1.6" height="1.6" fill="#c9cedc"/><rect x="3.8000000000000007" y="9.8" width="1.2" height="1.2" fill="#fbfcfe"/><rect x="0" y="9" width="1.6" height="1.6" fill="#c9cedc"/><rect x="0.8000000000000007" y="9.8" width="1.2" height="1.2" fill="#fbfcfe"/></svg>
<div style="left:811px;top:855px;width:1px;height:20px;background:#9095a9;"></div>
<div style="left:834px;top:855px;width:1px;height:20px;background:#9095a9;"></div>
<svg style="left:817.3px;top:858.4px" width="11" height="11" viewBox="0 0 11 11"><defs><radialGradient id="rd932" cx="0.4" cy="0.35" r="0.75"><stop offset="0" stop-color="#ee6a60"/><stop offset="1" stop-color="#b81c1c"/></radialGradient></defs><circle cx="5.5" cy="5.5" r="4.9" fill="url(#rd932)"/><path d="M3.7 3.7L7.3 7.3M7.3 3.7L3.7 7.3" stroke="#fff" stroke-width="1.5"/></svg>
<svg style="left:839.8px;top:858.4px" width="13" height="12" viewBox="0 0 13 12"><path d="M0.5 6.2L6.2 0.8L11.9 6.2" fill="none" stroke="#2f8ad4" stroke-width="1.5"/><path d="M2 5.8V11.2H10.4V5.8L6.2 2Z" fill="#f2f7fc" stroke="#6aa6dc" stroke-width="0.8"/><rect x="5" y="7" width="2.6" height="4.2" fill="#b5761c"/></svg>
<svg style="left:855.8px;top:858.8px" width="13" height="12" viewBox="0 0 13 12"><rect x="0.6" y="0.6" width="10.4" height="8.8" fill="#fff" stroke="#2b5fb4" stroke-width="1.1"/><path d="M0.6 3.4H11M0.6 6.2H11" stroke="#d98a8a" stroke-width="0.7"/><path d="M4 0.6V9.4M7.6 0.6V9.4" stroke="#7b9bd6" stroke-width="0.7"/><rect x="6.2" y="3.6" width="2" height="2" fill="#222"/><path d="M9.4 5.2L10.2 7.6L12.6 8L10.6 9.2L10.2 11.4L8.8 9.6L6.4 9.8L8.2 8.2Z" fill="#2484d6"/></svg>
<div style="left:880px;top:858px;width:14px;height:13px;background:#fff;border:1px solid #6a6a6a;"></div>
<svg style="left:899.8px;top:861px" width="9" height="7" viewBox="0 0 9 7"><path d="M0 0.2H8L4 6Z" fill="#111"/></svg>
<svg style="left:920px;top:863.4px" width="12" height="12" viewBox="0 0 12 12"><rect x="9" y="0" width="1.6" height="1.6" fill="#c9cedc"/><rect x="9.8" y="0.8" width="1.2" height="1.2" fill="#fbfcfe"/><rect x="9" y="3" width="1.6" height="1.6" fill="#c9cedc"/><rect x="9.8" y="3.8" width="1.2" height="1.2" fill="#fbfcfe"/><rect x="6" y="3" width="1.6" height="1.6" fill="#c9cedc"/><rect x="6.800000000000001" y="3.8" width="1.2" height="1.2" fill="#fbfcfe"/><rect x="9" y="6" width="1.6" height="1.6" fill="#c9cedc"/><rect x="9.8" y="6.8" width="1.2" height="1.2" fill="#fbfcfe"/><rect x="6" y="6" width="1.6" height="1.6" fill="#c9cedc"/><rect x="6.800000000000001" y="6.8" width="1.2" height="1.2" fill="#fbfcfe"/><rect x="3" y="6" width="1.6" height="1.6" fill="#c9cedc"/><rect x="3.8000000000000007" y="6.8" width="1.2" height="1.2" fill="#fbfcfe"/><rect x="9" y="9" width="1.6" height="1.6" fill="#c9cedc"/><rect x="9.8" y="9.8" width="1.2" height="1.2" fill="#fbfcfe"/><rect x="6" y="9" width="1.6" height="1.6" fill="#c9cedc"/><rect x="6.800000000000001" y="9.8" width="1.2" height="1.2" fill="#fbfcfe"/><rect x="3" y="9" width="1.6" height="1.6" fill="#c9cedc"/><rect x="3.8000000000000007" y="9.8" width="1.2" height="1.2" fill="#fbfcfe"/><rect x="0" y="9" width="1.6" height="1.6" fill="#c9cedc"/><rect x="0.8000000000000007" y="9.8" width="1.2" height="1.2" fill="#fbfcfe"/></svg>
</div>
<main class="g" id="matched-pairs" aria-label="Matched Pairs report">
<svg style="left:3.5px;top:106.5px" width="10" height="10" viewBox="0 0 10 10"><path d="M0.7 8.7L8.7 0.6V8.7Z" fill="#c0c0c0" stroke="#4c4c4c" stroke-width="1" stroke-linejoin="round"/></svg>
<div class="hb" style="left:14px;top:101px;width:391px;height:22px;"></div>
<svg style="left:18.2px;top:106px" width="14" height="12" viewBox="0 0 14 12"><rect x="0.5" y="0.5" width="13" height="11" rx="2.2" fill="#f6f6f6" stroke="#b5b5b5" stroke-width="1"/><path d="M2.6 3.8H10.6L6.6 8.2Z" fill="#d20a1a"/></svg>
<h1 style="left:34.10px;top:103.00px;font-size:15.0px;font-weight:700;letter-spacing:-0.256px;">Matched Pairs</h1>
<svg style="left:385px;top:104px" width="16" height="16" viewBox="0 0 16 16"><path d="M0.9 5.6V14.4H10.6" fill="none" stroke="#909090" stroke-width="1.2"/><rect x="3.3" y="0.8" width="12.2" height="12" rx="1.8" fill="#efefef" stroke="#8c8c8c" stroke-width="1.2"/><path d="M9.1 2.9L10.3 5.6L13.1 5.8L10.9 7.6L11.6 10.4L9.1 8.9L6.6 10.4L7.3 7.6L5.1 5.8L7.9 5.6Z" fill="#8a8a8a"/></svg>
<svg style="left:17.7px;top:133.6px" width="10" height="10" viewBox="0 0 10 10"><path d="M0.7 8.7L8.7 0.6V8.7Z" fill="#c0c0c0" stroke="#4c4c4c" stroke-width="1" stroke-linejoin="round"/></svg>
<div class="hb" style="left:28px;top:128px;width:377px;height:22px;"></div>
<h2 style="left:30.90px;top:130.00px;font-size:15.0px;font-weight:700;letter-spacing:-0.010px;">Difference: after-before</h2>
<svg style="left:0px;top:0px" width="410" height="450" viewBox="0 0 410 450"><rect x="90.5" y="161.5" width="240.0" height="240.0" fill="#fff" stroke="#9c9c9c" stroke-width="1"/><path d="M84 170.5H90.5M84 226.5H90.5M84 281.5H90.5M84 336.5H90.5M84 392.5H90.5M87 198.5H90.5M87 253.5H90.5M87 309.5H90.5M87 364.5H90.5M120.5 401.5V408M171.5 401.5V408M223.5 401.5V408M275.5 401.5V408M326.5 401.5V408M94.5 401.5V405M145.5 401.5V405M197.5 401.5V405M249.5 401.5V405M300.5 401.5V405" stroke="#9c9c9c" stroke-width="1" fill="none"/><path d="M90.5 281L209.9 170.3L330.5 281L209.9 391.7ZM90.5 281H330.5" fill="none" stroke="#6e6e6e" stroke-width="2" stroke-linejoin="miter"/><path d="M135.6 239.5H284.8M224.5 183V380" stroke="#ea2c45" stroke-width="1" fill="none"/><path d="M162 215.5H259.6M110 263.5H311.4" stroke="#ea2c45" stroke-width="1" stroke-dasharray="2 2" fill="none"/><circle cx="226.9" cy="220.3" r="2.75" fill="#000"/><circle cx="219.1" cy="289.2" r="2.75" fill="#000"/><circle cx="247.4" cy="235.9" r="2.75" fill="#000"/><circle cx="223.0" cy="199.3" r="2.75" fill="#000"/><circle cx="262.8" cy="240.3" r="2.75" fill="#000"/><circle cx="187.0" cy="270.3" r="2.75" fill="#000"/><circle cx="261.6" cy="230.3" r="2.75" fill="#000"/><circle cx="161.3" cy="228.1" r="2.75" fill="#000"/></svg>
<span style="left:229.16px;top:220.00px;font-size:11.15px;">a</span>
<span style="left:221.44px;top:289.00px;font-size:11.15px;">b</span>
<span style="left:249.72px;top:236.00px;font-size:11.15px;">c</span>
<span style="left:225.30px;top:199.00px;font-size:11.15px;">d</span>
<span style="left:265.13px;top:240.00px;font-size:11.15px;">e</span>
<span style="left:189.32px;top:270.00px;font-size:11.15px;">f</span>
<span style="left:263.85px;top:230.00px;font-size:11.15px;">g</span>
<span style="left:163.62px;top:228.00px;font-size:11.15px;">h</span>
<span style="left:96.40px;top:180.00px;font-size:11.15px;letter-spacing:-0.022px;">after</span>
<span style="left:96.40px;top:375.00px;font-size:11.15px;letter-spacing:-0.100px;">before</span>
<span style="left:61.80px;top:164.00px;font-size:12.58px;letter-spacing:-0.802px;">100</span>
<span style="left:68.20px;top:220.00px;font-size:12.58px;letter-spacing:-1.000px;">50</span>
<span style="left:74.20px;top:275.00px;font-size:12.58px;">0</span>
<span style="left:64.00px;top:330.00px;font-size:12.58px;letter-spacing:-0.496px;">-50</span>
<span style="left:57.60px;top:386.00px;font-size:12.58px;letter-spacing:-0.531px;">-100</span>
<span style="left:113.20px;top:410.00px;font-size:12.58px;letter-spacing:-1.000px;">20</span>
<span style="left:164.20px;top:410.00px;font-size:12.58px;letter-spacing:-1.000px;">40</span>
<span style="left:216.20px;top:410.00px;font-size:12.58px;letter-spacing:-1.000px;">60</span>
<span style="left:268.20px;top:410.00px;font-size:12.58px;letter-spacing:-1.000px;">80</span>
<span style="left:316.00px;top:410.00px;font-size:12.58px;letter-spacing:-0.802px;">100</span>
<span style="left:147.70px;top:427.00px;font-size:12.5px;letter-spacing:-0.166px;">Mean: (after+before)/2</span>
<div style="left:0;top:0;width:0;height:0;transform:translate(46.9px,343.4px) rotate(-90deg);transform-origin:0 0">
<span style="left:-1.00px;top:-11.00px;font-size:12.29px;color:#1c1c1c;letter-spacing:-0.028px;">Difference: after-before</span>
</div>
<span style="left:32.40px;top:451.00px;font-size:13.0px;letter-spacing:-0.222px;">after</span>
<span style="left:155.93px;top:451.00px;font-size:13.0px;letter-spacing:-0.638px;">79.25</span>
<span style="left:193.40px;top:451.00px;font-size:13.0px;letter-spacing:-0.061px;">t-Ratio</span>
<span style="left:259.98px;top:451.00px;font-size:13.0px;letter-spacing:-0.383px;">4.207407</span>
<span style="left:32.40px;top:470.00px;font-size:13.0px;letter-spacing:0.271px;">before</span>
<span style="left:155.93px;top:470.00px;font-size:13.0px;letter-spacing:-0.638px;">41.25</span>
<span style="left:192.40px;top:470.00px;font-size:13.0px;letter-spacing:-1.000px;">DF</span>
<span style="left:304.30px;top:470.00px;font-size:13.0px;">7</span>
<span style="left:31.40px;top:489.00px;font-size:13.0px;letter-spacing:0.077px;">Mean Difference</span>
<span style="left:172.46px;top:489.00px;font-size:13.0px;letter-spacing:-1.000px;">38</span>
<span style="left:192.40px;top:489.00px;font-size:13.0px;letter-spacing:0.391px;">Prob &gt; |t|</span>
<span style="left:268.79px;top:489.00px;font-size:13.0px;color:#e57a20;letter-spacing:-0.376px;">0.0040*</span>
<span style="left:32.40px;top:508.00px;font-size:13.0px;letter-spacing:-0.098px;">Std Error</span>
<span style="left:141.56px;top:508.00px;font-size:13.0px;letter-spacing:-0.439px;">9.03169</span>
<span style="left:192.40px;top:508.00px;font-size:13.0px;letter-spacing:0.503px;">Prob &gt; t</span>
<span style="left:268.79px;top:508.00px;font-size:13.0px;color:#e57a20;letter-spacing:-0.376px;">0.0020*</span>
<span style="left:31.40px;top:527.00px;font-size:13.0px;letter-spacing:0.052px;">Upper 95%</span>
<span style="left:141.56px;top:527.00px;font-size:13.0px;letter-spacing:-0.439px;">59.3566</span>
<span style="left:192.40px;top:527.00px;font-size:13.0px;letter-spacing:0.503px;">Prob &lt; t</span>
<span style="left:269.05px;top:527.00px;font-size:13.0px;letter-spacing:-0.517px;">0.9980</span>
<span style="left:31.40px;top:546.00px;font-size:13.0px;letter-spacing:-0.173px;">Lower 95%</span>
<span style="left:141.56px;top:546.00px;font-size:13.0px;letter-spacing:-0.439px;">16.6434</span>
<span style="left:31.40px;top:565.00px;font-size:13.0px;">N</span>
<span style="left:178.70px;top:565.00px;font-size:13.0px;">8</span>
<span style="left:32.40px;top:584.00px;font-size:13.0px;letter-spacing:0.114px;">Correlation</span>
<span style="left:141.56px;top:584.00px;font-size:13.0px;letter-spacing:-0.439px;">0.07752</span>
<svg style="left:31.7px;top:631.2px" width="10" height="10" viewBox="0 0 10 10"><path d="M0.7 8.7L8.7 0.6V8.7Z" fill="#c0c0c0" stroke="#4c4c4c" stroke-width="1" stroke-linejoin="round"/></svg>
<div class="hb" style="left:42px;top:625px;width:363px;height:22px;"></div>
<h3 style="left:45.30px;top:627.00px;font-size:15.0px;font-weight:700;letter-spacing:-0.736px;">Across Groups</h3>
<div class="th" style="left:43px;top:650px;width:45px;height:36px;"></div>
<div class="th" style="left:89px;top:650px;width:49px;height:36px;"></div>
<div class="th" style="left:139px;top:650px;width:75px;height:36px;"></div>
<div class="th" style="left:215px;top:650px;width:84px;height:36px;"></div>
<span style="left:46.20px;top:670.00px;font-size:13.0px;font-weight:700;letter-spacing:0.020px;">name</span>
<span style="left:97.30px;top:670.00px;font-size:13.0px;font-weight:700;letter-spacing:-0.329px;">Count</span>
<span style="left:176.70px;top:652.00px;font-size:13.0px;font-weight:700;">Mean</span>
<span style="left:146.60px;top:670.00px;font-size:13.0px;font-weight:700;letter-spacing:0.006px;">Difference</span>
<span style="left:223.20px;top:670.00px;font-size:13.0px;font-weight:700;letter-spacing:0.158px;">Mean Mean</span>
<span style="left:46.40px;top:689.00px;font-size:13.0px;">a</span>
<span style="left:126.30px;top:689.00px;font-size:13.0px;">1</span>
<span style="left:196.76px;top:689.00px;font-size:13.0px;letter-spacing:-1.000px;">55</span>
<span style="left:272.02px;top:689.00px;font-size:13.0px;letter-spacing:-0.834px;">61.5</span>
<span style="left:46.40px;top:708.00px;font-size:13.0px;">b</span>
<span style="left:126.30px;top:708.00px;font-size:13.0px;">1</span>
<span style="left:199.67px;top:708.00px;font-size:13.0px;letter-spacing:-1.000px;">-7</span>
<span style="left:272.02px;top:708.00px;font-size:13.0px;letter-spacing:-0.834px;">58.5</span>
<span style="left:46.40px;top:727.00px;font-size:13.0px;">c</span>
<span style="left:126.30px;top:727.00px;font-size:13.0px;">1</span>
<span style="left:196.76px;top:727.00px;font-size:13.0px;letter-spacing:-1.000px;">41</span>
<span style="left:272.02px;top:727.00px;font-size:13.0px;letter-spacing:-0.834px;">69.5</span>
<span style="left:46.40px;top:746.00px;font-size:13.0px;">d</span>
<span style="left:126.30px;top:746.00px;font-size:13.0px;">1</span>
<span style="left:196.76px;top:746.00px;font-size:13.0px;letter-spacing:-1.000px;">74</span>
<span style="left:281.36px;top:746.00px;font-size:13.0px;letter-spacing:-1.000px;">60</span>
<span style="left:46.40px;top:765.00px;font-size:13.0px;">e</span>
<span style="left:126.30px;top:765.00px;font-size:13.0px;">1</span>
<span style="left:196.76px;top:765.00px;font-size:13.0px;letter-spacing:-1.000px;">37</span>
<span style="left:272.02px;top:765.00px;font-size:13.0px;letter-spacing:-0.834px;">75.5</span>
<span style="left:46.40px;top:784.00px;font-size:13.0px;">f</span>
<span style="left:126.30px;top:784.00px;font-size:13.0px;">1</span>
<span style="left:196.76px;top:784.00px;font-size:13.0px;letter-spacing:-1.000px;">10</span>
<span style="left:281.36px;top:784.00px;font-size:13.0px;letter-spacing:-1.000px;">46</span>
<span style="left:46.40px;top:803.00px;font-size:13.0px;">g</span>
<span style="left:126.30px;top:803.00px;font-size:13.0px;">1</span>
<span style="left:196.76px;top:803.00px;font-size:13.0px;letter-spacing:-1.000px;">46</span>
<span style="left:281.36px;top:803.00px;font-size:13.0px;letter-spacing:-1.000px;">75</span>
<span style="left:46.40px;top:822.00px;font-size:13.0px;">h</span>
<span style="left:126.30px;top:822.00px;font-size:13.0px;">1</span>
<span style="left:196.76px;top:822.00px;font-size:13.0px;letter-spacing:-1.000px;">48</span>
<span style="left:281.36px;top:822.00px;font-size:13.0px;letter-spacing:-1.000px;">36</span>
<div class="th" style="left:43px;top:860px;width:104px;height:36px;"></div>
<div class="th" style="left:148px;top:860px;width:70px;height:36px;"></div>
<div class="th" style="left:219px;top:860px;width:63px;height:36px;"></div>
<div class="th" style="left:283px;top:860px;width:80px;height:36px;"></div>
<div class="th" style="left:364px;top:860px;width:41px;height:36px;"></div>
<span style="left:46.20px;top:862.00px;font-size:13.0px;font-weight:700;letter-spacing:-0.345px;">Test Across</span>
<span style="left:46.20px;top:880.00px;font-size:13.0px;font-weight:700;letter-spacing:-0.501px;">Groups</span>
<span style="left:170.20px;top:880.00px;font-size:13.0px;font-weight:700;letter-spacing:-0.087px;">F Ratio</span>
<span style="left:233.50px;top:880.00px;font-size:13.0px;font-weight:700;letter-spacing:-0.263px;">Prob&gt;F</span>
<span style="left:45.40px;top:899.00px;font-size:13.0px;letter-spacing:0.077px;">Mean Difference</span>
<span style="left:45.40px;top:918.00px;font-size:13.0px;letter-spacing:0.259px;">Mean Mean</span>
<span style="left:210.19px;top:899.00px;font-size:13.0px;">.</span>
<span style="left:268.59px;top:899.00px;font-size:13.0px;">.</span>
<span style="left:210.19px;top:918.00px;font-size:13.0px;">.</span>
<span style="left:268.59px;top:918.00px;font-size:13.0px;">.</span>
<span style="left:285.50px;top:899.00px;font-size:13.0px;letter-spacing:-0.278px;">Within Pairs</span>
<span style="left:285.50px;top:918.00px;font-size:13.0px;letter-spacing:-0.272px;">Among Pairs</span>
<span style="left:366.00px;top:899.00px;font-size:13.0px;letter-spacing:-0.578px;">Y Axis</span>
<span style="left:366.00px;top:918.00px;font-size:13.0px;letter-spacing:-0.525px;">X Axis</span>
</main>
<main class="g" id="oneway" aria-label="Oneway Analysis of Data By Label report">
<svg style="left:416.7px;top:106.5px" width="10" height="10" viewBox="0 0 10 10"><path d="M0.7 8.7L8.7 0.6V8.7Z" fill="#c0c0c0" stroke="#4c4c4c" stroke-width="1" stroke-linejoin="round"/></svg>
<div class="hb" style="left:427px;top:101px;width:502px;height:22px;"></div>
<svg style="left:431.2px;top:106px" width="14" height="12" viewBox="0 0 14 12"><rect x="0.5" y="0.5" width="13" height="11" rx="2.2" fill="#f6f6f6" stroke="#b5b5b5" stroke-width="1"/><path d="M2.6 3.8H10.6L6.6 8.2Z" fill="#d20a1a"/></svg>
<h1 style="left:447.80px;top:103.00px;font-size:15.0px;font-weight:700;letter-spacing:-0.392px;">Oneway Analysis of Data By Label</h1>
<svg style="left:909.3px;top:103.6px" width="16" height="16" viewBox="0 0 16 16"><path d="M0.9 5.6V14.4H10.6" fill="none" stroke="#909090" stroke-width="1.2"/><rect x="3.3" y="0.8" width="12.2" height="12" rx="1.8" fill="#efefef" stroke="#8c8c8c" stroke-width="1.2"/><path d="M9.1 2.9L10.3 5.6L13.1 5.8L10.9 7.6L11.6 10.4L9.1 8.9L6.6 10.4L7.3 7.6L5.1 5.8L7.9 5.6Z" fill="#8a8a8a"/></svg>
<svg style="left:414px;top:0px" width="518" height="340" viewBox="414 0 518 340"><rect x="500.5" y="134.5" width="356.0" height="162.0" fill="#fff" stroke="#9c9c9c" stroke-width="1"/><path d="M494 140.5H500.5M494 178.5H500.5M494 215.5H500.5M494 253.5H500.5M494 291.5H500.5M497 159.5H500.5M497 197.5H500.5M497 234.5H500.5M497 272.5H500.5M500.5 296.5V303M678.5 296.5V303M856.5 296.5V303" stroke="#9c9c9c" stroke-width="1" fill="none"/><path d="M500.5 215.5H856.5" stroke="#808080" stroke-width="1" fill="none"/><circle cx="589.0" cy="145.3" r="2.7" fill="#000"/><circle cx="589.0" cy="162.2" r="2.7" fill="#000"/><circle cx="586.1" cy="168.3" r="2.7" fill="#000"/><circle cx="592.1" cy="168.3" r="2.7" fill="#000"/><circle cx="589.0" cy="174.2" r="2.7" fill="#000"/><circle cx="589.0" cy="180.3" r="2.7" fill="#000"/><circle cx="589.0" cy="205.3" r="2.7" fill="#000"/><circle cx="589.0" cy="221.9" r="2.7" fill="#000"/><circle cx="767.0" cy="208.6" r="2.7" fill="#000"/><circle cx="767.0" cy="224.5" r="2.7" fill="#000"/><circle cx="767.0" cy="247.6" r="2.7" fill="#000"/><circle cx="767.0" cy="253.7" r="2.7" fill="#000"/><circle cx="764.0" cy="259.6" r="2.7" fill="#000"/><circle cx="770.0" cy="259.6" r="2.7" fill="#000"/><circle cx="767.0" cy="267.2" r="2.7" fill="#000"/><circle cx="767.0" cy="285.0" r="2.7" fill="#000"/><path d="M500.5 179.5L589.0 150.6L678.5 179.5L589.0 207.7Z" fill="none" stroke="#279c2e" stroke-width="1.15" stroke-linejoin="round"/><path d="M500.5 179.5H678.5M563.4 159.5H615.2M564.4 199.5H614.4" fill="none" stroke="#279c2e" stroke-width="1"/><path d="M678.5 251.5L767.0 222.7L856.5 251.5L767.0 279.4Z" fill="none" stroke="#279c2e" stroke-width="1.15" stroke-linejoin="round"/><path d="M678.5 251.5H856.5M741.0 231.5H794.0M743.6 271.5H791.2" fill="none" stroke="#279c2e" stroke-width="1"/></svg>
<span style="left:471.80px;top:134.00px;font-size:12.58px;letter-spacing:-0.752px;">100</span>
<span style="left:477.90px;top:172.00px;font-size:12.58px;letter-spacing:-0.605px;">80</span>
<span style="left:477.90px;top:209.00px;font-size:12.58px;letter-spacing:-0.605px;">60</span>
<span style="left:477.60px;top:247.00px;font-size:12.58px;letter-spacing:-0.305px;">40</span>
<span style="left:478.00px;top:285.00px;font-size:12.58px;letter-spacing:-0.705px;">20</span>
<span style="left:577.00px;top:299.00px;font-size:12.5px;letter-spacing:-0.263px;">after</span>
<span style="left:750.20px;top:299.00px;font-size:12.5px;letter-spacing:-0.300px;">before</span>
<span style="left:662.50px;top:316.00px;font-size:12.5px;letter-spacing:-0.404px;">Label</span>
<div style="left:0;top:0;width:0;height:0;transform:translate(446.2px,253.6px) rotate(-90deg);transform-origin:0 0">
<span style="left:-1.00px;top:-11.00px;font-size:12.29px;color:#1c1c1c;letter-spacing:-0.318px;">Block Centered</span>
</div>
<div style="left:0;top:0;width:0;height:0;transform:translate(462.2px,226.6px) rotate(-90deg);transform-origin:0 0">
<span style="left:-1.00px;top:-11.00px;font-size:12.29px;color:#1c1c1c;letter-spacing:-0.508px;">Data</span>
</div>
<svg style="left:430.8px;top:343.6px" width="10" height="10" viewBox="0 0 10 10"><path d="M0.7 8.7L8.7 0.6V8.7Z" fill="#c0c0c0" stroke="#4c4c4c" stroke-width="1" stroke-linejoin="round"/></svg>
<div class="hb" style="left:441px;top:338px;width:488px;height:22px;"></div>
<h2 style="left:444.20px;top:340.00px;font-size:15.0px;font-weight:700;letter-spacing:-0.386px;">Oneway Anova</h2>
<svg style="left:446.6px;top:368.70000000000005px" width="8" height="13" viewBox="0 0 8 13"><path d="M0.6 0.5L6.8 6.3L0.6 12.1Z" fill="#fcfcfc" stroke="#787878" stroke-width="1.1" stroke-linejoin="round"/></svg>
<div class="hb" style="left:455px;top:365px;width:120px;height:22px;"></div>
<h3 style="left:458.30px;top:367.00px;font-size:15.0px;font-weight:700;letter-spacing:-0.184px;">Summary of Fit</h3>
<svg style="left:444.8px;top:395.6px" width="10" height="10" viewBox="0 0 10 10"><path d="M0.7 8.7L8.7 0.6V8.7Z" fill="#c0c0c0" stroke="#4c4c4c" stroke-width="1" stroke-linejoin="round"/></svg>
<div class="hb" style="left:455px;top:390px;width:474px;height:22px;"></div>
<h3 style="left:458.10px;top:392.00px;font-size:15.0px;font-weight:700;letter-spacing:-0.164px;">Pooled t Test</h3>
<span style="left:456.60px;top:416.00px;font-size:13.0px;letter-spacing:0.193px;">before-after</span>
<span style="left:456.60px;top:435.00px;font-size:13.0px;letter-spacing:-0.159px;">Assuming equal variances</span>
<div class="th" style="left:456px;top:453px;width:82px;height:95px;"></div>
<div class="th" style="left:602px;top:453px;width:62px;height:95px;"></div>
<span style="left:458.40px;top:455.00px;font-size:13.0px;letter-spacing:0.191px;">Difference</span>
<span style="left:555.62px;top:455.00px;font-size:13.0px;letter-spacing:-0.330px;">-38.000</span>
<span style="left:605.30px;top:455.00px;font-size:13.0px;letter-spacing:0.078px;">t Ratio</span>
<span style="left:674.33px;top:455.00px;font-size:13.0px;letter-spacing:-0.290px;">-4.20741</span>
<span style="left:459.40px;top:474.00px;font-size:13.0px;letter-spacing:-0.153px;">Std Err Dif</span>
<span style="left:567.73px;top:474.00px;font-size:13.0px;letter-spacing:-0.638px;">9.032</span>
<span style="left:604.30px;top:474.00px;font-size:13.0px;letter-spacing:-1.000px;">DF</span>
<span style="left:716.40px;top:474.00px;font-size:13.0px;">7</span>
<span style="left:458.40px;top:493.00px;font-size:13.0px;letter-spacing:0.028px;">Upper CL Dif</span>
<span style="left:555.62px;top:493.00px;font-size:13.0px;letter-spacing:-0.330px;">-16.643</span>
<span style="left:604.30px;top:493.00px;font-size:13.0px;letter-spacing:0.347px;">Prob &gt; |t|</span>
<span style="left:680.89px;top:493.00px;font-size:13.0px;color:#e57a20;letter-spacing:-0.376px;">0.0040*</span>
<span style="left:458.40px;top:512.00px;font-size:13.0px;letter-spacing:-0.073px;">Lower CL Dif</span>
<span style="left:555.62px;top:512.00px;font-size:13.0px;letter-spacing:-0.330px;">-59.357</span>
<span style="left:604.30px;top:512.00px;font-size:13.0px;letter-spacing:0.391px;">Prob &gt; t</span>
<span style="left:680.65px;top:512.00px;font-size:13.0px;letter-spacing:-0.517px;">0.9980</span>
<span style="left:459.40px;top:531.00px;font-size:13.0px;letter-spacing:0.031px;">Confidence</span>
<span style="left:574.92px;top:531.00px;font-size:13.0px;letter-spacing:-0.834px;">0.95</span>
<span style="left:604.30px;top:531.00px;font-size:13.0px;letter-spacing:0.391px;">Prob &lt; t</span>
<span style="left:680.89px;top:531.00px;font-size:13.0px;color:#e57a20;letter-spacing:-0.376px;">0.0020*</span>
<div class="th" style="left:456px;top:556px;width:65px;height:19px;"></div>
<span style="left:459.40px;top:558.00px;font-size:13.0px;letter-spacing:-0.076px;">Cohen&#x27;s d</span>
<span style="left:530.90px;top:558.00px;font-size:13.0px;letter-spacing:-0.403px;">-2.10</span>
<svg style="left:414px;top:430px" width="518" height="110" viewBox="414 430 518 110"><path d="M741.0 511.39 L742.5 511.37 L744.0 511.34 L745.5 511.31 L747.0 511.28 L748.5 511.25 L750.0 511.21 L751.5 511.16 L753.0 511.11 L754.5 511.06 L756.0 510.99 L757.5 510.92 L759.0 510.84 L760.5 510.75 L762.0 510.65 L763.5 510.54 L765.0 510.41 L766.5 510.26 L768.0 510.10 L769.5 509.91 L771.0 509.70 L772.5 509.46 L774.0 509.20 L775.5 508.89 L777.0 508.55 L778.5 508.16 L780.0 507.73 L781.5 507.24 L783.0 506.68 L784.5 506.06 L786.0 505.36 L787.5 504.57 L789.0 503.69 L790.5 502.70 L792.0 501.60 L793.5 500.37 L795.0 499.01 L796.5 497.51 L798.0 495.85 L799.5 494.03 L801.0 492.04 L802.5 489.87 L804.0 487.53 L805.5 485.02 L807.0 482.34 L808.5 479.51 L810.0 476.54 L811.5 473.45 L813.0 470.27 L814.5 467.05 L816.0 463.81 L817.5 460.62 L819.0 457.52 L820.5 454.58 L822.0 451.84 L823.5 449.37 L825.0 447.23 L826.5 445.47 L828.0 444.12 L829.5 443.24 L831.0 442.83 L832.5 442.91 L834.0 443.48 L835.5 444.52 L837.0 446.01 L838.5 447.90 L840.0 450.16 L841.5 452.72 L843.0 455.54 L844.5 458.54 L846.0 461.68 L847.5 464.89 L849.0 468.13 L850.5 471.34 L852.0 474.49 L853.5 477.54 L855.0 480.47 L856.5 483.26 L858.0 485.88 L859.5 488.33 L861.0 490.61 L862.5 492.72 L864.0 494.65 L865.5 496.42 L867.0 498.03 L868.5 499.48 L870.0 500.80 L871.5 501.98 L873.0 503.04 L874.5 503.99 L876.0 504.84 L877.5 505.60 L879.0 506.28 L880.5 506.88 L882.0 507.41 L883.5 507.88 L885.0 508.30 L886.5 508.67 L888.0 509.00 L889.5 509.29 L891.0 509.55 L892.5 509.77 L894.0 509.98 L895.5 510.15 L897.0 510.31 L898.5 510.45 L900.0 510.58 L901.5 510.69 L903.0 510.78 L904.5 510.87 L906.0 510.95 L907.5 511.02 L909.0 511.08 L910.5 511.13 L912.0 511.18 L913.5 511.22 L915.0 511.26 L916.5 511.29 L918.0 511.32 L919.5 511.35 L921.0 511.37" fill="none" stroke="#3f7df0" stroke-width="1.25"/><path d="M831.5 442.8V512.0" stroke="#3f7df0" stroke-width="1.1"/><path d="M752.5 494V512.0" stroke="#ea2c45" stroke-width="1"/><path d="M747.5 513V519M789.5 513V519M831.5 513V519M873.5 513V519M915.5 513V519M768.5 513V516M810.5 513V516M852.5 513V516M894.5 513V516" stroke="#7c7c7c" stroke-width="1" fill="none"/><path d="M741 512.4H922" stroke="#000" stroke-width="1.3"/></svg>
<span style="left:738.70px;top:521.00px;font-size:12.67px;letter-spacing:-0.279px;">-40</span>
<span style="left:780.60px;top:521.00px;font-size:12.67px;letter-spacing:-0.229px;">-20</span>
<span style="left:827.60px;top:521.00px;font-size:12.67px;">0</span>
<span style="left:866.50px;top:521.00px;font-size:12.67px;letter-spacing:-0.939px;">20</span>
<span style="left:908.30px;top:521.00px;font-size:12.67px;letter-spacing:-0.939px;">40</span>
<svg style="left:446.6px;top:581.7px" width="8" height="13" viewBox="0 0 8 13"><path d="M0.6 0.5L6.8 6.3L0.6 12.1Z" fill="#fcfcfc" stroke="#787878" stroke-width="1.1" stroke-linejoin="round"/></svg>
<div class="hb" style="left:455px;top:578px;width:153px;height:22px;"></div>
<h3 style="left:458.30px;top:580.00px;font-size:15.0px;font-weight:700;letter-spacing:-0.361px;">Analysis of Variance</h3>
<svg style="left:446.6px;top:606.7px" width="8" height="13" viewBox="0 0 8 13"><path d="M0.6 0.5L6.8 6.3L0.6 12.1Z" fill="#fcfcfc" stroke="#787878" stroke-width="1.1" stroke-linejoin="round"/></svg>
<div class="hb" style="left:455px;top:603px;width:192px;height:22px;"></div>
<h3 style="left:457.30px;top:605.00px;font-size:15.0px;font-weight:700;letter-spacing:-0.198px;">Means for Oneway Anova</h3>
<svg style="left:444.8px;top:633.8px" width="10" height="10" viewBox="0 0 10 10"><path d="M0.7 8.7L8.7 0.6V8.7Z" fill="#c0c0c0" stroke="#4c4c4c" stroke-width="1" stroke-linejoin="round"/></svg>
<div class="hb" style="left:455px;top:628px;width:172px;height:22px;"></div>
<h3 style="left:457.30px;top:630.00px;font-size:15.0px;font-weight:700;letter-spacing:-0.316px;">Block Means</h3>
<div class="th" style="left:456px;top:653px;width:45px;height:18px;"></div>
<div class="th" style="left:502px;top:653px;width:63px;height:18px;"></div>
<div class="th" style="left:566px;top:653px;width:61px;height:18px;"></div>
<div class="th" style="left:456px;top:672px;width:45px;height:152px;"></div>
<span style="left:459.40px;top:655.00px;font-size:13.0px;font-weight:700;letter-spacing:-0.046px;">name</span>
<span style="left:527.80px;top:655.00px;font-size:13.0px;font-weight:700;letter-spacing:-0.231px;">Mean</span>
<span style="left:573.10px;top:656.00px;font-size:13.0px;font-weight:700;letter-spacing:0.107px;">Number</span>
<span style="left:459.60px;top:674.00px;font-size:13.0px;">a</span>
<span style="left:516.26px;top:674.00px;font-size:13.0px;letter-spacing:-0.439px;">61.5000</span>
<span style="left:615.60px;top:674.00px;font-size:13.0px;">2</span>
<span style="left:459.60px;top:693.00px;font-size:13.0px;">b</span>
<span style="left:516.26px;top:693.00px;font-size:13.0px;letter-spacing:-0.439px;">58.5000</span>
<span style="left:615.60px;top:693.00px;font-size:13.0px;">2</span>
<span style="left:459.60px;top:712.00px;font-size:13.0px;">c</span>
<span style="left:516.26px;top:712.00px;font-size:13.0px;letter-spacing:-0.439px;">69.5000</span>
<span style="left:615.60px;top:712.00px;font-size:13.0px;">2</span>
<span style="left:459.60px;top:731.00px;font-size:13.0px;">d</span>
<span style="left:516.26px;top:731.00px;font-size:13.0px;letter-spacing:-0.439px;">60.0000</span>
<span style="left:615.60px;top:731.00px;font-size:13.0px;">2</span>
<span style="left:459.60px;top:750.00px;font-size:13.0px;">e</span>
<span style="left:516.26px;top:750.00px;font-size:13.0px;letter-spacing:-0.439px;">75.5000</span>
<span style="left:615.60px;top:750.00px;font-size:13.0px;">2</span>
<span style="left:459.60px;top:769.00px;font-size:13.0px;">f</span>
<span style="left:516.26px;top:769.00px;font-size:13.0px;letter-spacing:-0.439px;">46.0000</span>
<span style="left:615.60px;top:769.00px;font-size:13.0px;">2</span>
<span style="left:459.60px;top:788.00px;font-size:13.0px;">g</span>
<span style="left:516.26px;top:788.00px;font-size:13.0px;letter-spacing:-0.439px;">75.0000</span>
<span style="left:615.60px;top:788.00px;font-size:13.0px;">2</span>
<span style="left:459.60px;top:807.00px;font-size:13.0px;">h</span>
<span style="left:516.26px;top:807.00px;font-size:13.0px;letter-spacing:-0.439px;">36.0000</span>
<span style="left:615.60px;top:807.00px;font-size:13.0px;">2</span>
<span style="left:431.50px;top:829.00px;font-size:13.0px;letter-spacing:-0.449px;">Block</span>
<span style="left:469.50px;top:829.00px;font-size:13.0px;letter-spacing:-0.400px;">name</span>
</main>
</body>
</html>
